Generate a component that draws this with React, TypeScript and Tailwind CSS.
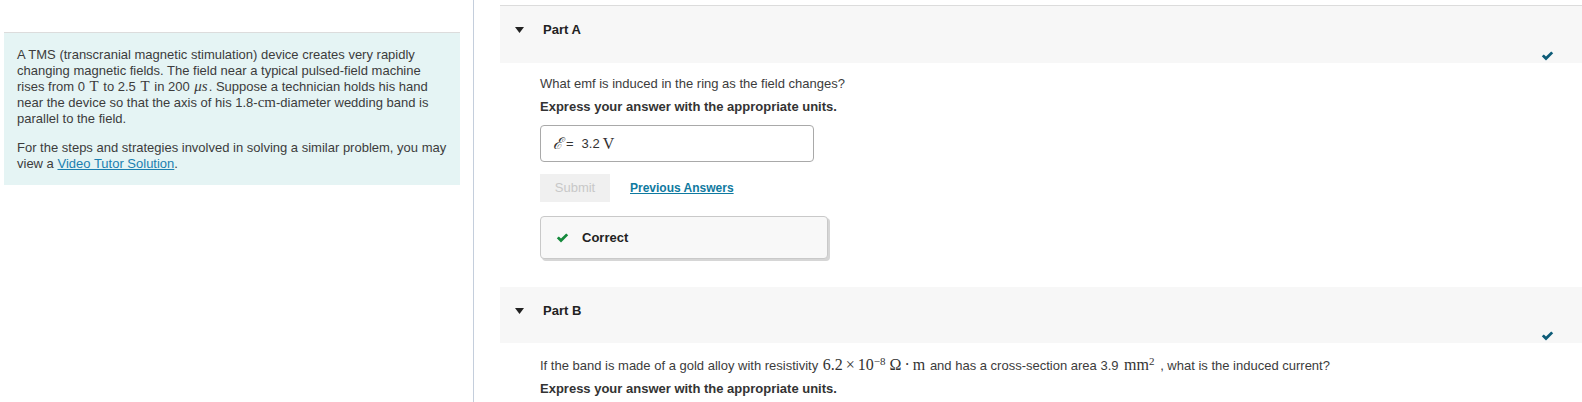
const serif = "font-['Liberation_Serif','DejaVu_Serif',serif] leading-none";

function TealCheck({ color = "#0d5c78" }: { color?: string }) {
  return (
    <svg width="13" height="10" viewBox="0 0 13 10" aria-hidden="true">
      <path d="M0.8 5.3 L2.8 3.4 L5 5.5 L10.2 0.4 L12.2 2.3 L5 9.4 Z" fill={color} />
    </svg>
  );
}

function PartHeader({ title, top }: { title: string; top?: boolean }) {
  return (
    <div
      className={`flex bg-[#f7f7f7] pl-[15px] pr-[28px] ${
        top ? "h-[58px] border-t border-[#dcdcdc]" : "h-[56px]"
      }`}
    >
      <div className="flex items-center gap-[19px] self-start pt-[16px] leading-[16px]">
        <svg width="9" height="6" viewBox="0 0 9 6" aria-hidden="true">
          <path d="M0 0 H9 L4.5 6 Z" fill="#222" />
        </svg>
        <span className="font-bold text-[13px] text-[#222]">{title}</span>
      </div>
      <div className="ml-auto self-end pb-[2px]">
        <TealCheck />
      </div>
    </div>
  );
}

export default function App() {
  return (
    <div className="flex h-[402px] overflow-hidden bg-white font-['Liberation_Sans',Arial,sans-serif] text-[13px] text-[#3c3c3c]">
      {/* Left: problem intro */}
      <div className="w-[473px] shrink-0 pl-[4px] pr-[13px] pt-[32px]">
        <div className="h-[153px] border-t border-[#dcdcdc] bg-[#e5f4f4] pl-[13px] pr-[10px] pt-[14px] leading-[16px]">
          <p>
            A TMS (transcranial magnetic stimulation) device creates very rapidly changing magnetic
            fields. The field near a typical pulsed-field machine rises from 0{" "}
            <span className={`${serif} mx-[1px] text-[15px]`}>T</span> to 2.5{" "}
            <span className={`${serif} mx-[1px] text-[15px]`}>T</span> in 200{" "}
            <span className={`${serif} mx-[1px] text-[15px] italic`}>μs</span>. Suppose a technician
            holds his hand near the device so that the axis of his 1.8-
            <span className={`${serif} text-[15px]`}>cm</span>-diameter wedding band is parallel to
            the field.
          </p>
          <p className="mt-[13px]">
            For the steps and strategies involved in solving a similar problem, you may view a{" "}
            <a href="#" className="text-[#1b7fb0] underline">
              Video Tutor Solution
            </a>
            .
          </p>
        </div>
      </div>

      <div className="w-px shrink-0 bg-[#c4cedc]" />

      {/* Right: parts */}
      <div className="flex-1 pl-[26px] pt-[5px]">
        <PartHeader title="Part A" top />
        <div className="pl-[40px]">
          <p className="mt-[13px] leading-[16px]">What emf is induced in the ring as the field changes?</p>
          <p className="mt-[7px] font-bold leading-[16px] text-[#333]">
            Express your answer with the appropriate units.
          </p>
          <div className="mt-[10px] flex h-[37px] w-[274px] items-center rounded-[4px] border border-[#a9a9a9] pl-[12px]">
            <span className={`${serif} text-[16px] italic text-[#333]`}>ℰ</span>
            <span className="ml-[3px] text-[13px] text-[#333]">=</span>
            <span className="ml-[8px] text-[13px] text-[#333]">3.2</span>
            <span className={`${serif} ml-[3px] text-[16px] text-[#333]`}>V</span>
          </div>
          <div className="mt-[12px] flex items-center gap-[20px]">
            <button className="h-[28px] w-[70px] bg-[#f0f0f0] text-[13px] text-[#c8c8c8]">Submit</button>
            <a href="#" className="font-bold text-[12px] text-[#0f7aa0] underline">
              Previous Answers
            </a>
          </div>
          <div className="mt-[14px] flex h-[43px] w-[288px] items-center gap-[13px] rounded-[4px] border border-[#c9c9c9] bg-[#f8f8f8] pl-[15px] shadow-[2px_2px_0_#d6d6d6]">
            <TealCheck color="#158a3c" />
            <span className="font-bold text-[13px] text-[#222]">Correct</span>
          </div>
        </div>

        <div className="mt-[28px]">
          <PartHeader title="Part B" />
        </div>
        <div className="pl-[40px]">
          <p className="mt-[14px] leading-[16px]">
            If the band is made of a gold alloy with resistivity{" "}
            <span className={`${serif} mx-[1px] text-[16px] text-[#333]`}>
              6.2<span className="mx-[3px]">×</span>10<sup className="text-[11px]">−8</sup>
              <span className="ml-[4px]">Ω</span>
              <span className="mx-[3px]">·</span>m
            </span>{" "}
            and has a cross-section area 3.9{" "}
            <span className={`${serif} mx-[2px] text-[16px] text-[#333]`}>
              mm<sup className="text-[11px]">2</sup>
            </span>{" "}
            , what is the induced current?
          </p>
          <p className="mt-[7px] font-bold leading-[16px] text-[#333]">
            Express your answer with the appropriate units.
          </p>
        </div>
      </div>
    </div>
  );
}
